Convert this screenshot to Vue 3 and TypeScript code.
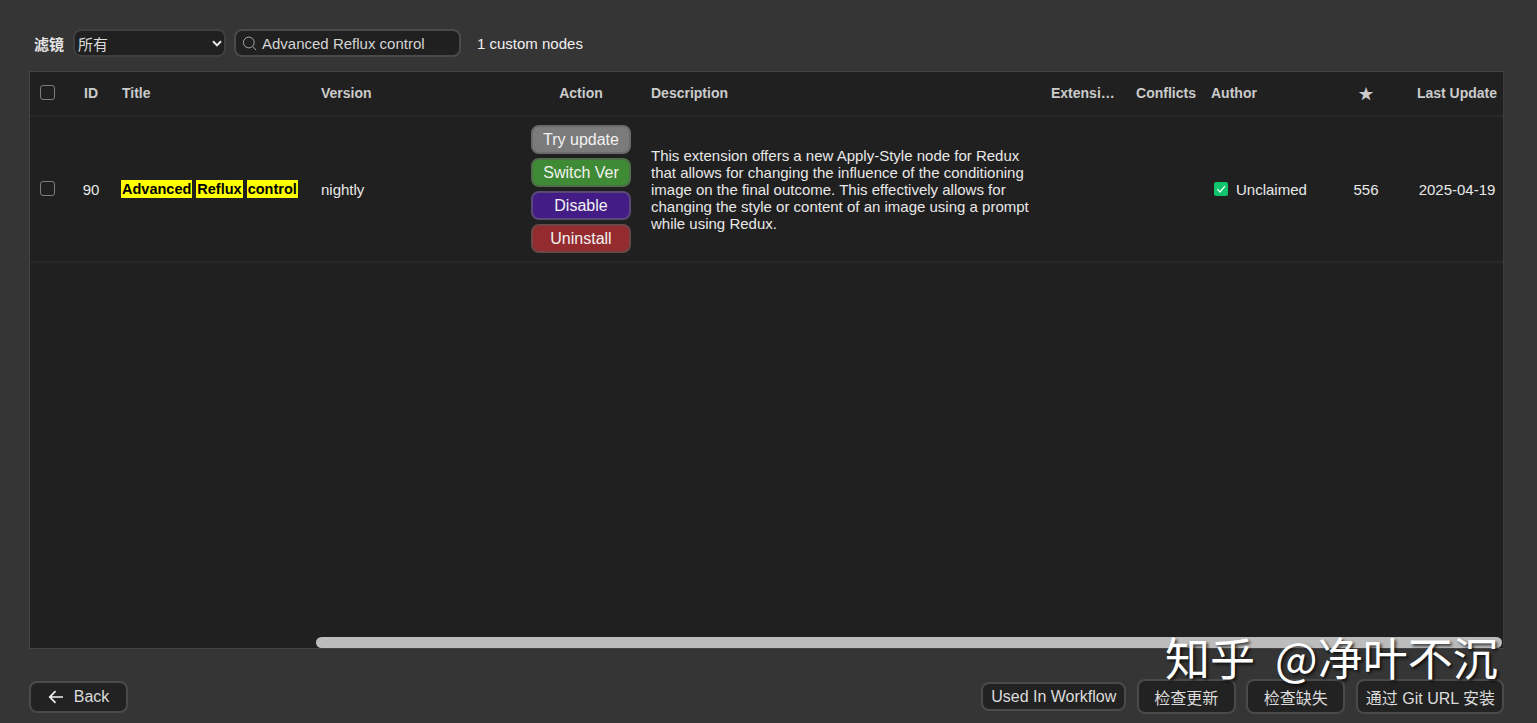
<script setup lang="ts">
const description =
  'This extension offers a new Apply-Style node for Redux that allows for changing the influence of the conditioning image on the final outcome. This effectively allows for changing the style or content of an image using a prompt while using Redux.'
const actions = [
  { label: 'Try update', kind: 'gray' },
  { label: 'Switch Ver', kind: 'green' },
  { label: 'Disable', kind: 'purple' },
  { label: 'Uninstall', kind: 'red' },
]
const words = ['Advanced', 'Reflux', 'control']
</script>

<template>
  <div class="page">
    <div class="toolbar">
      <label class="filter-label">滤镜</label>
      <div class="select">
        <span>所有</span>
        <svg width="10" height="7" viewBox="0 0 10 7"><path d="M1 1.2 5 5.4 9 1.2" fill="none" stroke="#e8e8e8" stroke-width="2" /></svg>
      </div>
      <div class="search">
        <svg width="15" height="15" viewBox="0 0 15 15"><circle cx="6.8" cy="6.5" r="5.4" fill="none" stroke="#a8a8a8" stroke-width="1" /><path d="M10.8 10.5 14 14" stroke="#a8a8a8" stroke-width="1" /></svg>
        <span>Advanced Reflux control</span>
      </div>
      <span class="count">1 custom nodes</span>
    </div>

    <div class="table">
      <div class="row head">
        <div class="cell center"><span class="check"></span></div>
        <div class="cell center">ID</div>
        <div class="cell">Title</div>
        <div class="cell">Version</div>
        <div class="cell center">Action</div>
        <div class="cell desc">Description</div>
        <div class="cell ext">Extensi…</div>
        <div class="cell center">Conflicts</div>
        <div class="cell">Author</div>
        <div class="cell center star">★</div>
        <div class="cell center">Last Update</div>
      </div>
      <div class="row body">
        <div class="cell center"><span class="check"></span></div>
        <div class="cell center">90</div>
        <div class="cell title">
          <mark v-for="w in words" :key="w">{{ w }}</mark>
        </div>
        <div class="cell">nightly</div>
        <div class="cell center actions">
          <button v-for="a in actions" :key="a.label" :class="['act', a.kind]">{{ a.label }}</button>
        </div>
        <div class="cell desc">{{ description }}</div>
        <div class="cell"></div>
        <div class="cell"></div>
        <div class="cell author">
          <svg width="14" height="14" viewBox="0 0 14 14"><rect width="14" height="14" rx="2" fill="#0fc46c" /><path d="M3.2 7.2 6 10 11 4.2" fill="none" stroke="#fff" stroke-width="1.2" /></svg>
          <span>Unclaimed</span>
        </div>
        <div class="cell center">556</div>
        <div class="cell center">2025-04-19</div>
      </div>
      <div class="thumb"></div>
    </div>

    <div class="footer">
      <button class="btn back">
        <svg width="16" height="14" viewBox="0 0 16 14"><path d="M15 7H2M7.5 1.2 1.8 7l5.7 5.8" fill="none" stroke="#f2f2f2" stroke-width="1.7" /></svg>
        <span>Back</span>
      </button>
      <div class="spacer"></div>
      <button class="btn short">Used In Workflow</button>
      <button class="btn fixed">检查更新</button>
      <button class="btn fixed">检查缺失</button>
      <button class="btn git">通过 Git URL 安装</button>
    </div>

    <div class="watermark">知乎 @净叶不沉</div>
  </div>
</template>

<style>
html,
body {
  margin: 0;
  background: #353535;
}
</style>

<style scoped>
.page {
  position: relative;
  box-sizing: border-box;
  width: 1537px;
  height: 723px;
  overflow: hidden;
  padding: 29px 33px 0 29px;
  display: flex;
  flex-direction: column;
  background: #353535;
  color: #e6e6e6;
  font-family: "Liberation Sans", "Noto Sans CJK SC", sans-serif;
  font-size: 15px;
}
.toolbar {
  display: flex;
  align-items: center;
  flex: none;
  height: 28px;
  padding-left: 5px;
  margin-bottom: 14px;
}
.filter-label {
  width: 39px;
  font-weight: 700;
  font-size: 15px;
  color: #e4e4e4;
}
.select {
  box-sizing: border-box;
  width: 153px;
  height: 28px;
  display: flex;
  align-items: center;
  justify-content: space-between;
  padding: 0 2px 0 3px;
  border: 2px solid #3f3f3f;
  border-radius: 8px;
  background: #202020;
  color: #dcdcdc;
}
.search {
  box-sizing: border-box;
  width: 227px;
  height: 28px;
  margin-left: 8px;
  display: flex;
  align-items: center;
  gap: 5px;
  padding-left: 6px;
  border: 2px solid #4a4a4a;
  border-radius: 8px;
  background: #202020;
  color: #d4d4d4;
}
.count {
  margin-left: 16px;
  color: #f0f0f0;
}
.table {
  position: relative;
  flex: none;
  box-sizing: border-box;
  height: 578px;
  overflow: hidden;
  background: #202020;
  border: 1px solid #454545;
  border-right-color: #3c3c3c;
}
.row {
  display: grid;
  grid-template-columns: 35px 52px 199px 205px 120px 400px 85px 80px 120px 80px 102px;
  border-bottom: 2px solid #282828;
}
.head {
  height: 43px;
  font-weight: 700;
  font-size: 14px;
  line-height: 17px;
  color: #cbcbcb;
}
.body {
  height: 144px;
  color: #e8e8e8;
}
.cell {
  display: flex;
  align-items: center;
  padding-left: 5px;
  min-width: 0;
  white-space: nowrap;
}
.center {
  justify-content: center;
  padding-left: 0;
}
.star {
  font-size: 15px;
}
.desc {
  padding: 0 10px;
  white-space: normal;
  line-height: 17px;
}
.ext {
  padding-left: 10px;
}
.check {
  box-sizing: border-box;
  width: 15px;
  height: 15px;
  margin-bottom: 2px;
  border: 1px solid #7d7d7d;
  border-radius: 3px;
}
.title {
  gap: 4px;
  padding-left: 4px;
  font-weight: 700;
  font-size: 14.5px;
}
mark {
  padding: 0 1px;
  background: #ffff00;
  color: #000;
  line-height: 18px;
}
.actions {
  flex-direction: column;
  gap: 4px;
}
.act {
  box-sizing: border-box;
  width: 100px;
  height: 29px;
  padding: 0;
  border: 2px solid #555;
  border-radius: 8px;
  font: inherit;
  font-size: 16px;
  color: #f2f2f2;
}
.gray { background: #7b7b7b; border-color: #6a6a6a; }
.green { background: #3f8a34; border-color: #4d6e49; }
.purple { background: #431c85; border-color: #5a4878; }
.red { background: #942b2f; border-color: #6d4648; }
.author {
  gap: 8px;
  padding-left: 8px;
}
.thumb {
  position: absolute;
  left: 286px;
  right: 1px;
  bottom: 0;
  height: 11px;
  border-radius: 6px;
  background: #bcbcbc;
}
.footer {
  display: flex;
  flex: none;
  align-items: center;
  gap: 10.5px;
  height: 35px;
  margin-top: 30px;
}
.spacer {
  flex: 1;
}
.btn {
  box-sizing: border-box;
  height: 35px;
  padding: 0 8px;
  border: 2px solid #4a4a4a;
  border-radius: 8px;
  background: #222;
  color: #dcdcdc;
  font: inherit;
  font-size: 16px;
  white-space: nowrap;
}
.btn.short {
  height: 29px;
}
.btn.fixed {
  width: 99px;
}
.btn.git {
  padding: 0 7px 0 8px;
}
.back {
  width: 99px;
  height: 32px;
  display: flex;
  align-items: center;
  justify-content: center;
  gap: 10px;
  padding: 0;
}
.watermark {
  position: absolute;
  left: 1165px;
  top: 627px;
  font-family: "Noto Sans CJK SC", sans-serif;
  font-size: 45px;
  line-height: 60px;
  word-spacing: 10px;
  color: #fff;
  white-space: nowrap;
  text-shadow: 2px 2px 3px rgba(0, 0, 0, 0.7);
}
</style>
